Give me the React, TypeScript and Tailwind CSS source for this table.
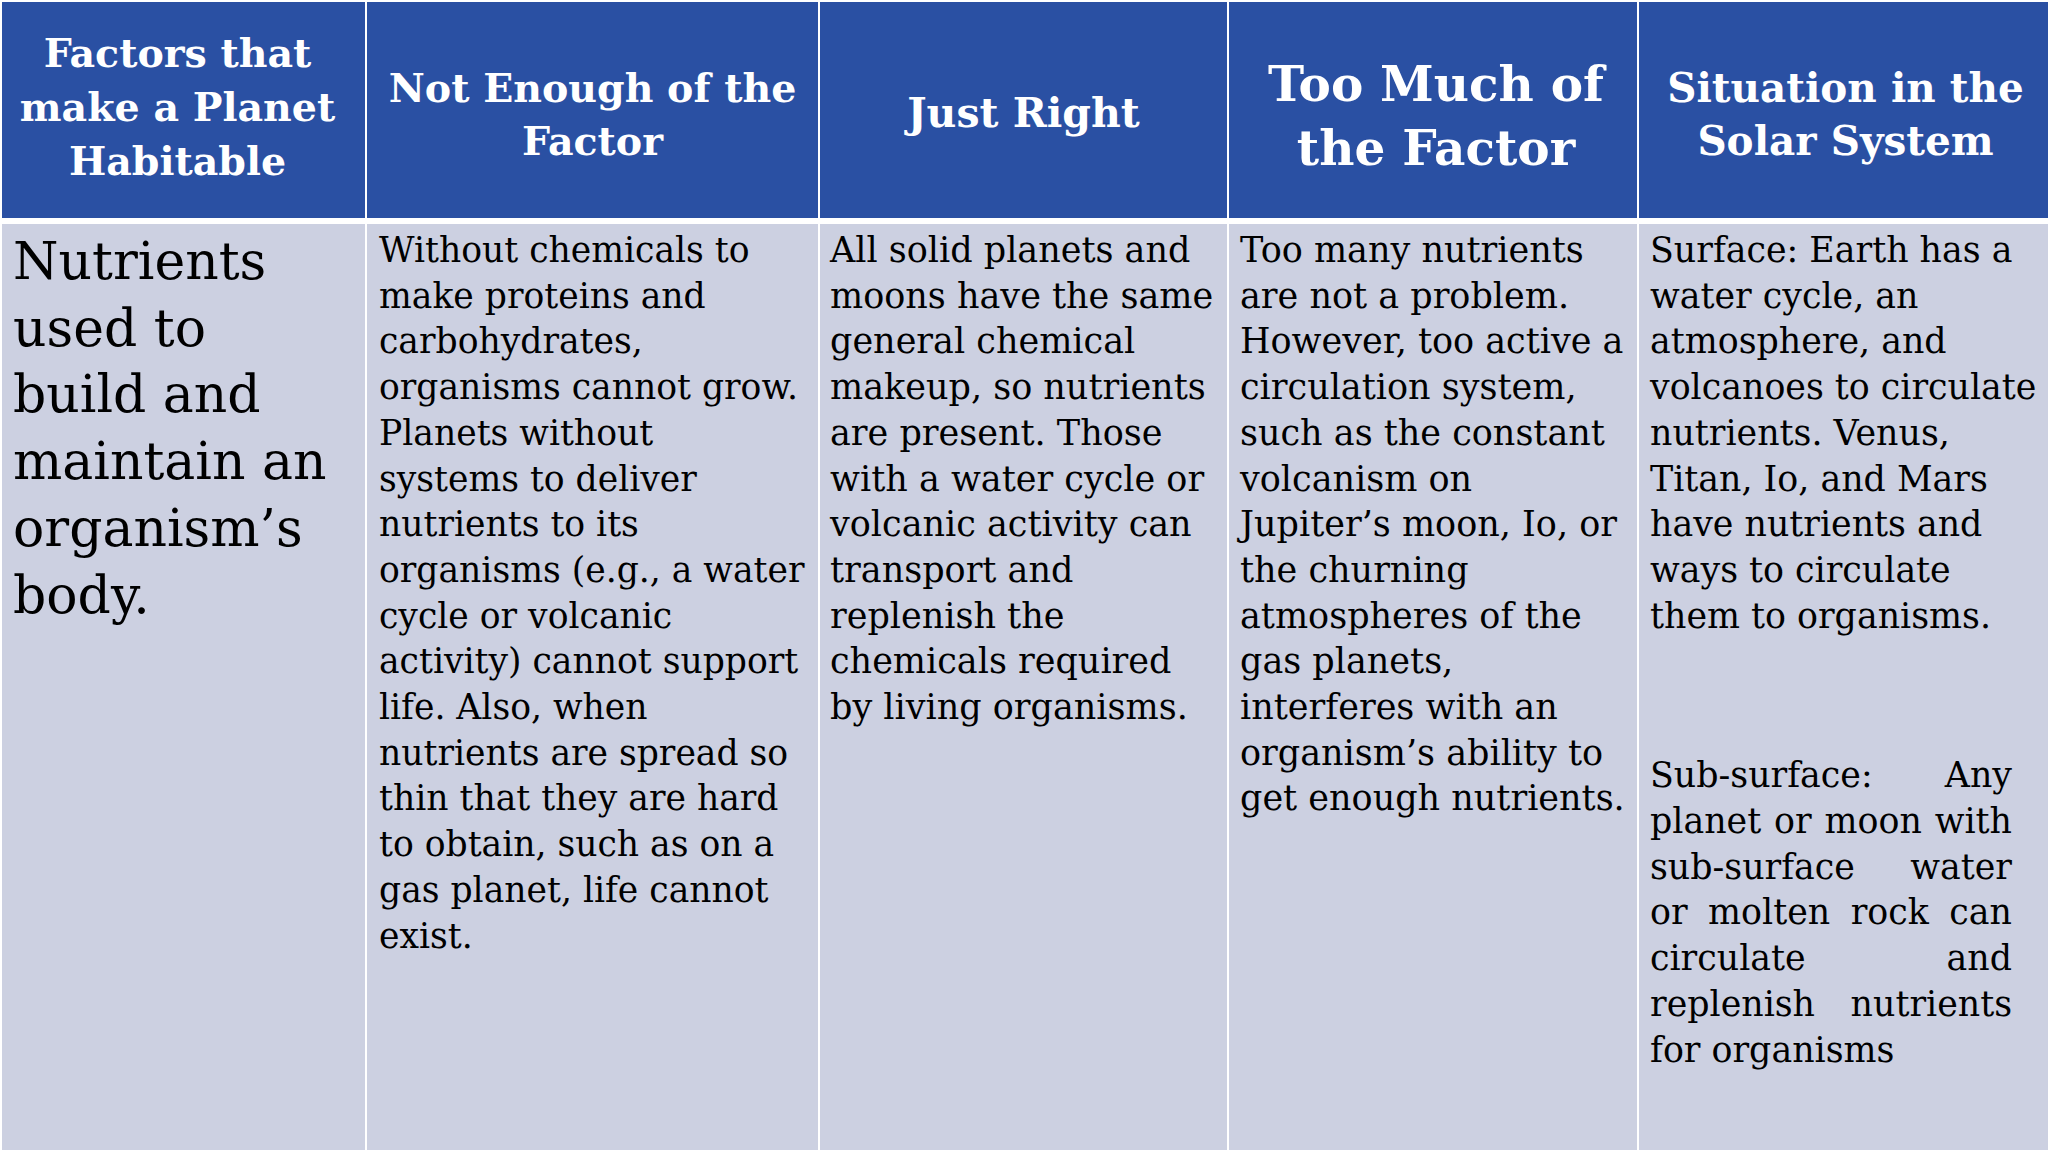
import * as React from 'react';

// Habitability factor table: one header row, one body row, five columns.

const serif = "font-['DejaVu_Serif','Liberation_Serif',serif]";

type Col = {
  head: string[];
  headClass: string;
  body: string[];
  bodyClass: string;
};

const cols: Col[] = [
  {
    head: ['Factors that', 'make a Planet', 'Habitable'],
    headClass: 'text-[39.5px] leading-[54px] pb-[6px] pr-[12px]',
    body: ['Nutrients', 'used to', 'build and', 'maintain an', 'organism’s', 'body.'],
    bodyClass: 'text-[52px] leading-[66.7px] pt-[4px] pl-[11px]',
  },
  {
    head: ['Not Enough of the', 'Factor'],
    headClass: 'text-[39.5px] leading-[53px] pt-[10px]',
    body: [
      'Without chemicals to',
      'make proteins and',
      'carbohydrates,',
      'organisms cannot grow.',
      'Planets without',
      'systems to deliver',
      'nutrients to its',
      'organisms (e.g., a water',
      'cycle or volcanic',
      'activity) cannot support',
      'life. Also, when',
      'nutrients are spread so',
      'thin that they are hard',
      'to obtain, such as on a',
      'gas planet, life cannot',
      'exist.',
    ],
    bodyClass: 'text-[34.6px] leading-[45.7px] pt-[4px] pl-[12px]',
  },
  {
    head: ['Just Right'],
    headClass: 'text-[41px] leading-[55px] pt-[6px]',
    body: [
      'All solid planets and',
      'moons have the same',
      'general chemical',
      'makeup, so nutrients',
      'are present. Those',
      'with a water cycle or',
      'volcanic activity can',
      'transport and',
      'replenish the',
      'chemicals required',
      'by living organisms.',
    ],
    bodyClass: 'text-[35px] leading-[45.7px] pt-[4px] pl-[10px]',
  },
  {
    head: ['Too Much of', 'the Factor'],
    headClass: 'text-[48.5px] leading-[64px] pt-[12px] pl-[6px]',
    body: [
      'Too many nutrients',
      'are not a problem.',
      'However, too active a',
      'circulation system,',
      'such as the constant',
      'volcanism on',
      'Jupiter’s moon, Io, or',
      'the churning',
      'atmospheres of the',
      'gas planets,',
      'interferes with an',
      'organism’s ability to',
      'get enough nutrients.',
    ],
    bodyClass: 'text-[35px] leading-[45.7px] pt-[4px] pl-[11px]',
  },
];

const surface = [
  'Surface: Earth has a',
  'water cycle, an',
  'atmosphere, and',
  'volcanoes to circulate',
  'nutrients. Venus,',
  'Titan, Io, and Mars',
  'have nutrients and',
  'ways to circulate',
  'them to organisms.',
];

const subSurface = [
  'Sub-surface: Any',
  'planet or moon with',
  'sub-surface water',
  'or molten rock can',
  'circulate and',
  'replenish nutrients',
];

function HeadCell({ lines, className }: { lines: string[]; className: string }) {
  return (
    <div className="flex items-center justify-center bg-[#2a50a3] text-white">
      <div className={`${serif} ${className} text-center font-bold`}>
        {lines.map((l) => (
          <div key={l} className="whitespace-nowrap">
            {l}
          </div>
        ))}
      </div>
    </div>
  );
}

function BodyCell({ lines, className }: { lines: string[]; className: string }) {
  return (
    <div className={`bg-[#ccd0e1] text-black ${serif} ${className}`}>
      {lines.map((l) => (
        <div key={l} className="whitespace-nowrap">
          {l}
        </div>
      ))}
    </div>
  );
}

export default function App() {
  return (
    <div className="h-[1152px] w-[2048px] overflow-hidden bg-white pl-[2px] pt-[2px]">
      <div className="grid grid-cols-[363px_451px_407px_408px_409px] grid-rows-[216px_926px] gap-x-[2px] gap-y-[6px]">
        {cols.map((c) => (
          <HeadCell key={c.head.join(' ')} lines={c.head} className={c.headClass} />
        ))}
        <HeadCell lines={['Situation in the', 'Solar System']} className="text-[40.5px] leading-[53px] pt-[10px] pl-[4px]" />

        {cols.map((c) => (
          <BodyCell key={c.body[0]} lines={c.body} className={c.bodyClass} />
        ))}

        {/* last column: two paragraphs, the second one justified */}
        <div className={`bg-[#ccd0e1] text-black ${serif} pl-[11px] pt-[4px] text-[34.8px] leading-[45.7px]`}>
          {surface.map((l) => (
            <div key={l} className="whitespace-nowrap">
              {l}
            </div>
          ))}
          <div className="mt-[114px] w-[362px]">
            {subSurface.map((l) => (
              <div key={l} className="whitespace-nowrap text-justify [text-align-last:justify]">
                {l}
              </div>
            ))}
            <div className="whitespace-nowrap">for organisms</div>
          </div>
        </div>
      </div>
    </div>
  );
}
